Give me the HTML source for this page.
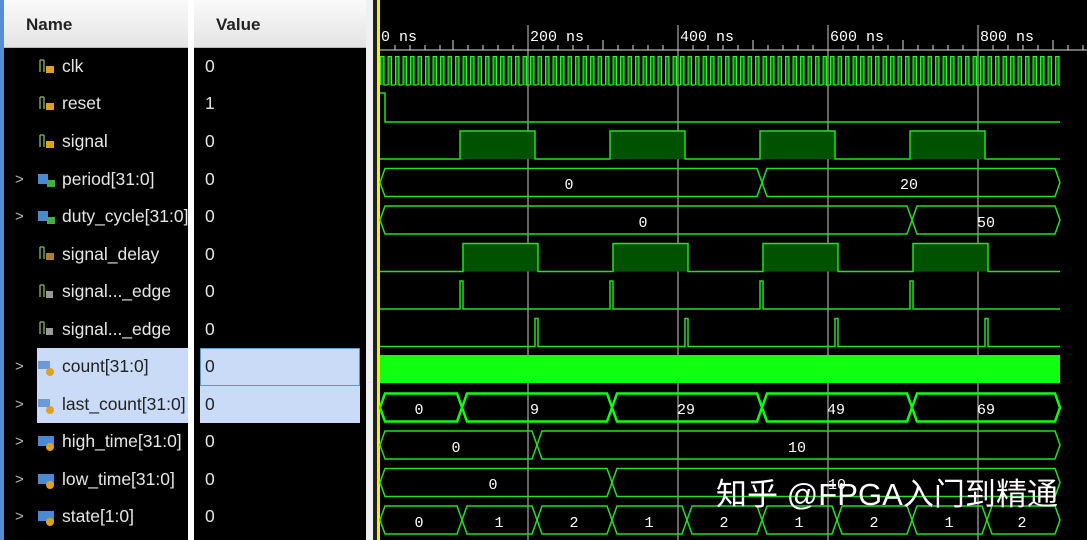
<!DOCTYPE html>
<html><head><meta charset="utf-8"><style>
body{margin:0;width:1087px;height:540px;background:#000;overflow:hidden;position:relative;font-family:"Liberation Sans",sans-serif}
.a{position:absolute}
.hd{top:0;height:48px;background:linear-gradient(#fafafa,#e4e4e4);font-weight:bold;font-size:17px;color:#222;line-height:50px;border-bottom:1px solid #bbb}
.r{position:absolute;height:37px;line-height:37px;font-size:17.5px;color:#e6e6e6;white-space:nowrap}
.sel{background:#c9dbf6;color:#222}
.arr{position:absolute;left:15px;color:#bbb;font-size:15px}
</style></head><body>
<div class="a" style="left:0;top:0;width:4px;height:540px;background:#5b8ad8"></div>
<div class="a hd" style="left:4px;width:184px;padding-left:22px;box-sizing:border-box">Name</div>
<div class="a hd" style="left:194px;width:172px;padding-left:22px;box-sizing:border-box">Value</div>
<div class="a" style="left:366px;top:0;width:7px;height:540px;background:#f0f0f0"></div>
<div class="a" style="left:373px;top:0;width:4px;height:540px;background:#222"></div>
<div class="a" style="left:377px;top:0;width:3px;height:540px;background:#f5f000"></div>

<div class="a sel" style="left:37px;top:348px;width:151px;height:75px"></div>
<div class="a sel" style="left:200px;top:348px;width:160px;height:75px"></div>
<div class="a" style="left:200px;top:348px;width:158px;height:36px;border:1px solid #5a9ad0"></div>

<div class="r" style="left:62px;top:48px">clk</div>
<div class="r" style="left:62px;top:85px">reset</div>
<div class="r" style="left:62px;top:123px">signal</div>
<div class="r" style="left:62px;top:161px">period[31:0]</div>
<div class="r" style="left:62px;top:198px">duty_cycle[31:0]</div>
<div class="r" style="left:62px;top:236px">signal_delay</div>
<div class="r" style="left:62px;top:273px">signal..._edge</div>
<div class="r" style="left:62px;top:311px">signal..._edge</div>
<div class="r" style="left:62px;top:348px;color:#222">count[31:0]</div>
<div class="r" style="left:62px;top:386px;color:#222">last_count[31:0]</div>
<div class="r" style="left:62px;top:423px">high_time[31:0]</div>
<div class="r" style="left:62px;top:461px">low_time[31:0]</div>
<div class="r" style="left:62px;top:498px">state[1:0]</div>
<div class="a" style="left:188px;top:0;width:6px;height:540px;background:#fff"></div>
<div class="r arr" style="top:161px">&gt;</div><div class="r arr" style="top:198px">&gt;</div>
<div class="r arr" style="top:348px">&gt;</div><div class="r arr" style="top:386px">&gt;</div>
<div class="r arr" style="top:423px">&gt;</div><div class="r arr" style="top:461px">&gt;</div>
<div class="r arr" style="top:498px">&gt;</div>
<div class="r" style="left:205px;top:48px">0</div>
<div class="r" style="left:205px;top:85px">1</div>
<div class="r" style="left:205px;top:123px">0</div>
<div class="r" style="left:205px;top:161px">0</div>
<div class="r" style="left:205px;top:198px">0</div>
<div class="r" style="left:205px;top:236px">0</div>
<div class="r" style="left:205px;top:273px">0</div>
<div class="r" style="left:205px;top:311px">0</div>
<div class="r" style="left:205px;top:348px;color:#222">0</div>
<div class="r" style="left:205px;top:386px;color:#222">0</div>
<div class="r" style="left:205px;top:423px">0</div>
<div class="r" style="left:205px;top:461px">0</div>
<div class="r" style="left:205px;top:498px">0</div>

<svg class="a" style="left:0;top:0" width="60" height="540">
<g fill="none" stroke="#7a9a5a" stroke-width="1.5">
<path d="M40 60v12M44 60v12M40 60h4M40 97v12M44 97v12M40 97h4M40 135v12M44 135v12M40 135h4M40 247v12M44 247v12M40 247h4M40 285v12M44 285v12M40 285h4M40 322v12M44 322v12M40 322h4"/></g>
<g fill="#e0a020"><rect x="46" y="66" width="8" height="7"/><rect x="46" y="103" width="8" height="7"/><rect x="46" y="141" width="8" height="7"/><rect x="46" y="253" width="8" height="7" fill="#b08030"/></g>
<g fill="#999"><rect x="46" y="291" width="7" height="7"/><rect x="46" y="328" width="7" height="7"/></g>
<g><rect x="38" y="174" width="10" height="10" fill="#4a8ad0"/><rect x="47" y="180" width="8" height="7" fill="#40b040"/><rect x="38" y="211" width="10" height="10" fill="#4a8ad0"/><rect x="47" y="217" width="8" height="7" fill="#40b040"/>
<rect x="38" y="361" width="12" height="8" fill="#6a9ad8"/><circle cx="50" cy="372" r="4" fill="#e0a020"/>
<rect x="38" y="399" width="12" height="8" fill="#6a9ad8"/><circle cx="50" cy="410" r="4" fill="#e0a020"/>
<rect x="38" y="436" width="16" height="10" fill="#4a8ad0"/><circle cx="50" cy="447" r="4" fill="#e0a020"/>
<rect x="38" y="474" width="16" height="10" fill="#4a8ad0"/><circle cx="50" cy="485" r="4" fill="#e0a020"/>
<rect x="38" y="511" width="16" height="10" fill="#4a8ad0"/><circle cx="50" cy="522" r="4" fill="#e0a020"/></g>
</svg>

<svg class="a" style="left:0;top:0" width="1087" height="540" font-family="Liberation Mono, monospace">
<defs><pattern id="ck" x="380" y="56" width="7.5" height="30" patternUnits="userSpaceOnUse">
<rect x="0" y="0" width="3.75" height="29" fill="#008000"/>
<path d="M0.5 29V0.5H4V29H7.5" fill="none" stroke="#33ee33" stroke-width="1.2"/></pattern></defs>
<line x1="380" y1="50" x2="1087" y2="50" stroke="#ddd"/>
<g stroke="#ddd">
<path d="M395 50v-5M410 50v-5M425 50v-5M440 50v-5M453 50v-10M468 50v-5M483 50v-5M498 50v-5M513 50v-5
M543 50v-5M558 50v-5M573 50v-5M588 50v-5M603 50v-10M618 50v-5M633 50v-5M648 50v-5M663 50v-5
M693 50v-5M708 50v-5M723 50v-5M738 50v-5M753 50v-10M768 50v-5M783 50v-5M798 50v-5M813 50v-5
M843 50v-5M858 50v-5M873 50v-5M888 50v-5M903 50v-10M918 50v-5M933 50v-5M948 50v-5M963 50v-5
M993 50v-5M1008 50v-5M1023 50v-5M1038 50v-5M1053 50v-10M1068 50v-5M1083 50v-5"/>
<path d="M528 25V540M678 25V540M828 25V540M978 25V540" stroke="#ccc"/></g>
<g fill="#fff" font-size="15"><text x="381" y="41">0 ns</text><text x="530" y="41">200 ns</text><text x="680" y="41">400 ns</text><text x="830" y="41">600 ns</text><text x="980" y="41">800 ns</text></g>
<rect x="380" y="56" width="680" height="30" fill="url(#ck)"/>
<g fill="none" stroke="#22e022" stroke-width="1.5">
<polyline points="380,93 385,93 385,122 1060,122"/>
</g>
<g fill="#005200">
<rect x="460" y="131" width="75" height="28"/><rect x="610" y="131" width="75" height="28"/><rect x="760" y="131" width="75" height="28"/><rect x="910" y="131" width="75" height="28"/>
<rect x="463" y="243.5" width="75" height="28"/><rect x="613" y="243.5" width="75" height="28"/><rect x="763" y="243.5" width="75" height="28"/><rect x="913" y="243.5" width="75" height="28"/>
</g>
<g fill="none" stroke="#22e022" stroke-width="1.5">
<polyline points="380,159 460,159 460,131 535,131 535,159 610,159 610,131 685,131 685,159 760,159 760,131 835,131 835,159 910,159 910,131 985,131 985,159 1060,159"/>
<polyline points="380,271.5 463,271.5 463,243.5 538,243.5 538,271.5 613,271.5 613,243.5 688,243.5 688,271.5 763,271.5 763,243.5 838,243.5 838,271.5 913,271.5 913,243.5 988,243.5 988,271.5 1060,271.5"/>
<polyline points="380,309 460,309 460,281 463,281 463,309 610,309 610,281 613,281 613,309 760,309 760,281 763,281 763,309 910,309 910,281 913,281 913,309 1060,309"/>
<polyline points="380,346.5 535,346.5 535,318.5 538,318.5 538,346.5 685,346.5 685,318.5 688,318.5 688,346.5 835,346.5 835,318.5 838,318.5 838,346.5 985,346.5 985,318.5 988,318.5 988,346.5 1060,346.5"/>
<polygon points="380,182.5 385,168.5 757,168.5 762,182.5 757,196.5 385,196.5"/>
<polygon points="762,182.5 767,168.5 1055,168.5 1060,182.5 1055,196.5 767,196.5"/>
<polygon points="380,220 385,206 907,206 912,220 907,234 385,234"/>
<polygon points="912,220 917,206 1055,206 1060,220 1055,234 917,234"/>
<polygon points="380,445 385,431 532,431 537,445 532,459 385,459"/>
<polygon points="537,445 542,431 1055,431 1060,445 1055,459 542,459"/>
<polygon points="380,482.5 385,468.5 607,468.5 612,482.5 607,496.5 385,496.5"/>
<polygon points="612,482.5 617,468.5 1055,468.5 1060,482.5 1055,496.5 617,496.5"/>
<polygon points="380,520 385,506 457,506 462,520 457,534 385,534"/>
<polygon points="462,520 467,506 532,506 537,520 532,534 467,534"/>
<polygon points="537,520 542,506 607,506 612,520 607,534 542,534"/>
<polygon points="612,520 617,506 682,506 687,520 682,534 617,534"/>
<polygon points="687,520 692,506 757,506 762,520 757,534 692,534"/>
<polygon points="762,520 767,506 832,506 837,520 832,534 767,534"/>
<polygon points="837,520 842,506 907,506 912,520 907,534 842,534"/>
<polygon points="912,520 917,506 982,506 987,520 982,534 917,534"/>
<polygon points="987,520 992,506 1055,506 1060,520 1055,534 992,534"/>
</g>
<rect x="380" y="355" width="680" height="28" fill="#11ff11"/>
<g fill="none" stroke="#11ff11" stroke-width="2.5">
<polygon points="380,407.5 385,393.5 457,393.5 462,407.5 457,421.5 385,421.5"/>
<polygon points="462,407.5 467,393.5 607,393.5 612,407.5 607,421.5 467,421.5"/>
<polygon points="612,407.5 617,393.5 757,393.5 762,407.5 757,421.5 617,421.5"/>
<polygon points="762,407.5 767,393.5 907,393.5 912,407.5 907,421.5 767,421.5"/>
<polygon points="912,407.5 917,393.5 1055,393.5 1060,407.5 1055,421.5 917,421.5"/>
</g>
<g fill="#fff" font-size="15">
<text x="569" y="189" text-anchor="middle">0</text><text x="909" y="189" text-anchor="middle">20</text>
<text x="643" y="227" text-anchor="middle">0</text><text x="977" y="227">50</text>
<text x="419" y="414" text-anchor="middle">0</text><text x="530" y="414">9</text><text x="677" y="414">29</text><text x="827" y="414">49</text><text x="977" y="414">69</text>
<text x="456" y="452" text-anchor="middle">0</text><text x="797" y="452" text-anchor="middle">10</text>
<text x="493" y="489" text-anchor="middle">0</text><text x="837" y="489" text-anchor="middle">10</text>
<text x="419" y="527" text-anchor="middle">0</text><text x="499" y="527" text-anchor="middle">1</text><text x="574" y="527" text-anchor="middle">2</text><text x="649" y="527" text-anchor="middle">1</text><text x="724" y="527" text-anchor="middle">2</text><text x="799" y="527" text-anchor="middle">1</text><text x="874" y="527" text-anchor="middle">2</text><text x="949" y="527" text-anchor="middle">1</text><text x="1022" y="527" text-anchor="middle">2</text>
</g>
<text x="716" y="505" fill="#fff" font-size="31" textLength="342" font-family="Liberation Sans, Noto Sans CJK SC, sans-serif">知乎 @FPGA入门到精通</text>
</svg>
</body></html>
